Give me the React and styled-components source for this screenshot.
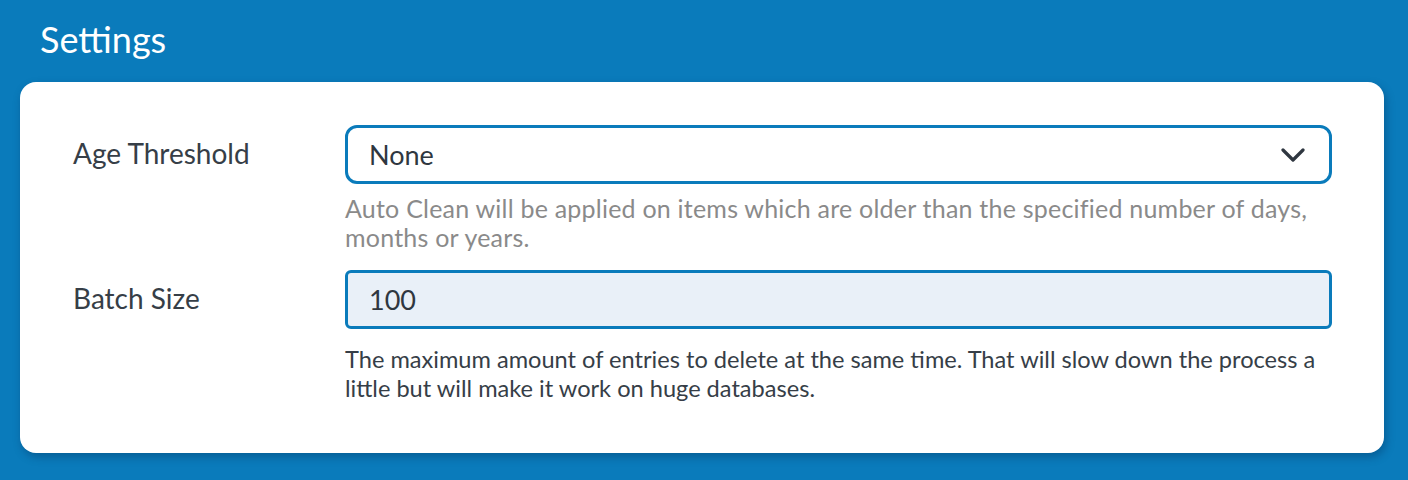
import React from "react";
import styled, { createGlobalStyle } from "styled-components";

const Global = createGlobalStyle`
  html, body { margin: 0; padding: 0; }
  body {
    background: #0a7bbb;
    font-family: Lato, "Noto Sans", sans-serif;
    width: 1408px;
    height: 480px;
    overflow: hidden;
  }
`;

const Page = styled.div`
  padding: 17px 24px 27px 20px;
  box-sizing: border-box;
  height: 480px;
  display: flex;
  flex-direction: column;
`;

const Title = styled.h1`
  margin: 0 0 0 20px;
  height: 65px;
  font-size: 36px;
  line-height: 44px;
  font-weight: 400;
  color: #ffffff;
`;

const Card = styled.div`
  background: #ffffff;
  border-radius: 16px;
  box-shadow: 2px 4px 8px rgba(0, 40, 80, 0.35);
  padding: 43px 52px 0 53px;
  flex: 1;
  display: grid;
  grid-template-columns: 272px 1fr;
  grid-auto-rows: min-content;
`;

const Label = styled.label`
  font-size: 28px;
  color: #363e47;
  padding-top: 11px;
`;

const Field = styled.div`
  display: flex;
  flex-direction: column;
  margin-bottom: ${(p) => p.$mb || 0}px;
`;

const Box = styled.div`
  height: 59px;
  box-sizing: border-box;
  border: 3px solid #0a7bbb;
  border-radius: ${(p) => (p.$select ? 12 : 6)}px;
  background: ${(p) => (p.$select ? "#ffffff" : "#e9f0f8")};
  display: flex;
  align-items: center;
  justify-content: space-between;
  padding: 0 24px 0 21px;
  font-size: 27px;
  color: #2f3740;
`;

const Help = styled.p`
  margin: ${(p) => p.$mt}px 0 0 0;
  font-size: ${(p) => (p.$muted ? 25 : 23.6)}px;
  letter-spacing: ${(p) => (p.$muted ? 0.22 : 0)}px;
  line-height: 29px;
  color: ${(p) => (p.$muted ? "#8a8a8a" : "#363e47")};
`;

const Chevron = () => (
  <svg width="24" height="14" viewBox="0 0 24 14" fill="none">
    <path d="M2 2l10 10 10-10" stroke="#2f3740" strokeWidth="3.2" strokeLinecap="round" strokeLinejoin="round" />
  </svg>
);

export default function App() {
  return (
    <>
      <Global />
      <Page>
        <Title>Settings</Title>
        <Card>
          <Label>Age Threshold</Label>
          <Field $mb={18}>
            <Box $select>
              <span>None</span>
              <Chevron />
            </Box>
            <Help $muted $mt={10}>
              Auto Clean will be applied on items which are older than the specified number of days, months or years.
            </Help>
          </Field>
          <Label>Batch Size</Label>
          <Field>
            <Box>
              <span>100</span>
            </Box>
            <Help $mt={16}>
              The maximum amount of entries to delete at the same time. That will slow down the process a little but will make it work on huge databases.
            </Help>
          </Field>
        </Card>
      </Page>
    </>
  );
}
